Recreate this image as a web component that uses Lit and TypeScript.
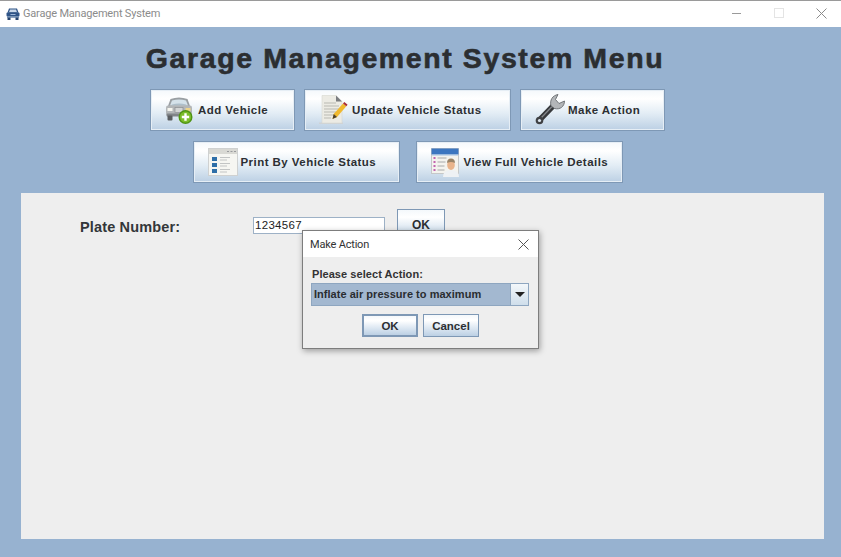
import { LitElement, html, css, svg } from "lit";
import { customElement } from "lit/decorators.js";

const carSmall = svg`<svg width="14" height="12" viewBox="0 0 14 12">
  <path d="M3 .5h8l1.600 4.300H1.400z" fill="#2f5487"/>
  <path d="M4 1.600h6l.9 2.500H3.100z" fill="#c9d7e8"/>
  <rect x="0.500" y="4.600" width="13" height="4" rx="1" fill="#2f5487"/>
  <rect x="1" y="8.400" width="12" height="1.300" fill="#5d7ea8"/>
  <rect x="1.500" y="9.500" width="3" height="2.500" fill="#24426c"/>
  <rect x="9.500" y="9.500" width="3" height="2.500" fill="#24426c"/>
  <rect x="4.500" y="6" width="5" height="1" fill="#9db6d6"/>
</svg>`;

const carPlus = svg`<svg width="30" height="30" viewBox="0 0 30 30">
  <path d="M5.500 4Q14 1 22.500 4L25 11H3z" fill="#9a9fa3"/>
  <path d="M7 5.500Q14 3.500 21 5.500L23 10.500H5z" fill="#d5e2ea"/>
  <path d="M7 9.500Q14 7.500 21 9.500L22 10.500H6z" fill="#aebfca"/>
  <rect x="1" y="10.500" width="26" height="9.500" rx="2" fill="#b3b6b8"/>
  <rect x="2.500" y="13" width="5" height="3" fill="#f5f5ee"/>
  <rect x="20.500" y="13" width="5" height="3" fill="#ecd48a"/>
  <rect x="10" y="12.500" width="8" height="5" fill="#d3d5d5" stroke="#8a8e92" stroke-width=".7"/>
  <rect x="1.500" y="18.500" width="25" height="3" rx="1" fill="#808488"/>
  <rect x="2.500" y="20.500" width="5" height="5" rx="1" fill="#5a5d60"/>
  <rect x="20" y="20.500" width="5" height="5" rx="1" fill="#5a5d60"/>
  <circle cx="20.500" cy="22" r="7" fill="#4f9413"/>
  <circle cx="20.500" cy="22" r="5.600" fill="#7cbd2a"/>
  <path d="M20.500 18.300v7.400M16.800 22h7.400" stroke="#fff" stroke-width="2.400"/>
</svg>`;

const docPencil = svg`<svg width="30" height="30" viewBox="0 0 30 30">
  <path d="M0 27.500h24v1.500H0z" fill="#cfd3d6"/>
  <path d="M3 .5h14l6 6v21.500H3z" fill="#ecebe4" stroke="#d6d6d0" stroke-width=".6"/>
  <path d="M17 .5l6 6h-6z" fill="#7b7d80"/>
  <path d="M5 8h12M5 11h15M5 14h15M5 17h12M5 20h9M5 23h7" stroke="#b9b9b2" stroke-width="1"/>
  <path d="M13.500 24l1.200-5L24 8.500l3.300 2.700L18 22z" fill="#f0b92f"/>
  <path d="M24 8.500l1.300-1.500 3.300 2.700-1.300 1.500z" fill="#a92a35"/>
  <path d="M13.500 24l1.200-5 3.300 3z" fill="#4a4030"/>
</svg>`;

const wrench = svg`<svg width="30" height="32" viewBox="0 0 30 32">
  <path d="M4.500 26L19 11" stroke="#36383b" stroke-width="5.400" stroke-linecap="round"/>
  <path d="M6.500 23.500L18.500 11" stroke="#85888c" stroke-width="1.300"/>
  <circle cx="4.500" cy="26.500" r="3.800" fill="#3f4144"/>
  <circle cx="4.500" cy="26.500" r="1.600" fill="#dfe7ef"/>
  <path d="M16 12C14.500 6 17.500 1.500 23 .5L20.500 5.500 24 9.500 29.500 7C29.500 12.500 25 16 19.500 14.500z" fill="#b3b6b9" stroke="#5c5f63" stroke-width=".8"/>
</svg>`;

const listWindow = svg`<svg width="30" height="28" viewBox="0 0 30 28">
  <rect x=".5" y=".5" width="29" height="27" fill="#f6f6f2" stroke="#cfd1d1"/>
  <rect x="1" y="1" width="28" height="5" fill="#d9d9d4"/>
  <path d="M19 3.500h2M22.500 3.500h2M26 3.500h2" stroke="#9a9b9e"/>
  <rect x="4" y="9" width="5" height="4" fill="#2f6fa8"/>
  <rect x="4" y="15" width="5" height="4" fill="#2f6fa8"/>
  <rect x="4" y="21" width="5" height="4" fill="#2f6fa8"/>
  <path d="M12 9.500h10M12 12h7M12 15.500h10M12 18h7M12 21.500h10M12 24h7" stroke="#c2c4c4"/>
</svg>`;

const userDetails = svg`<svg width="30" height="29" viewBox="0 0 30 29">
  <rect x=".5" y=".5" width="27" height="25" fill="#f4f3ee" stroke="#c6c8c8"/>
  <rect x=".5" y=".5" width="27" height="6" fill="#3c76c0"/>
  <path d="M1 7h26" stroke="#9fc0e4"/>
  <path d="M2.500 10h2M2.500 14h2M2.500 18h2M2.500 22h2" stroke="#b2359a" stroke-width="1.500"/>
  <path d="M6.500 10h9M6.500 14h8M6.500 18h7M6.500 22h7" stroke="#a8aaaa"/>
  <path d="M12 29q0-7 8-7t8 7z" fill="#eef1f4"/>
  <ellipse cx="20" cy="17" rx="3.800" ry="5" fill="#e9b48c"/>
  <path d="M16 15q0-4.500 4-4.500t4 4.500q-4-2-8 0z" fill="#9a8468"/>
</svg>`;

@customElement("menu-button")
export class MenuButton extends LitElement {
  static styles = css`
    :host {
      display: block;
    }
    button {
      box-sizing: border-box;
      width: 100%;
      height: 42px;
      padding: 0 0 0 14px;
      display: flex;
      align-items: center;
      gap: 3px;
      border: 1px solid #7e98b5;
      box-shadow: inset 0 0 0 1px #e6eef5;
      background: linear-gradient(#f4f8fb 0%, #ffffff 22%, #e3edf5 58%, #bcd0e4 100%);
      color: #2c2f33;
      font: bold 11.5px "Liberation Sans", Arial, sans-serif;
      letter-spacing: 0.45px;
    }
    .icon {
      display: flex;
    }
  `;
  static properties = { label: {}, icon: { attribute: false } };
  label = "";
  icon: unknown = null;

  render() {
    return html`<button><span class="icon">${this.icon}</span><span>${this.label}</span></button>`;
  }
}

@customElement("app-root")
export class AppRoot extends LitElement {
  static styles = css`
    :host {
      display: block;
      width: 841px;
      height: 557px;
      overflow: hidden;
      position: relative;
      font-family: "Liberation Sans", Arial, sans-serif;
      background: #97b2d0;
    }
    .titlebar {
      box-sizing: border-box;
      height: 27px;
      background: #fff;
      border-top: 1px solid #9a9a9a;
      display: flex;
      align-items: center;
      padding: 0 14px 1px 6px;
      gap: 3px;
      color: #8b8b8b;
      font: 11px Roboto, "Noto Sans", sans-serif;
      letter-spacing: -0.19px;
    }
    .titlebar .name {
      flex: 1;
    }
    .win-btns {
      display: flex;
      align-items: center;
      gap: 32px;
    }
    .win-btns svg {
      display: block;
    }
    .content {
      display: flex;
      flex-direction: column;
      align-items: center;
      padding: 0 26px 0 0;
    }
    h1 {
      margin: 0 5px 0 0;
      padding-top: 15px;
      height: 47px;
      box-sizing: border-box;
      font-size: 28.500px;
      line-height: 32px;
      font-weight: bold;
      color: #2b2e31;
      letter-spacing: 1.600px;
      -webkit-text-stroke: 0.6px #2b2e31;
      white-space: nowrap;
    }
    .row {
      display: flex;
      height: 42px;
      margin-bottom: 10px;
    }
    .row.first {
      margin-top: 15px;
      gap: 9px;
    }
    .row.second {
      gap: 16px;
    }
    .w145 { width: 145px; }
    .w207 { width: 207px; }
    .panel {
      box-sizing: border-box;
      width: 803px;
      height: 346px;
      margin-left: 21px;
      background: #eeeeee;
      align-self: flex-start;
      display: flex;
      align-items: flex-start;
      padding: 16px 0 0 59px;
    }
    .plate-label {
      width: 173px;
      margin-top: 9px;
      font-size: 14.500px;
      line-height: 18px;
      font-weight: bold;
      letter-spacing: 0.15px;
      color: #333639;
    }
    .plate-input {
      box-sizing: border-box;
      width: 132px;
      height: 17px;
      margin-top: 8px;
      padding-left: 1px;
      background: #fff;
      border: 1px solid #9db1c6;
      font-size: 11.500px;
      line-height: 15px;
      letter-spacing: 0.3px;
      color: #222;
    }
    .plate-ok {
      box-sizing: border-box;
      width: 48px;
      height: 31px;
      margin-left: 12px;
      padding: 0;
      border: 1px solid #7e98b5;
      background: linear-gradient(#f4f8fb, #fff 25%, #dfe9f3 60%, #bcd0e4);
      font: bold 12px "Liberation Sans", Arial, sans-serif;
      color: #2c2f33;
    }
    .dialog {
      position: absolute;
      left: 302px;
      top: 230px;
      box-sizing: border-box;
      width: 237px;
      height: 119px;
      background: #eeeeee;
      border: 1px solid #7d7d7d;
      box-shadow: 1px 2px 6px rgba(0, 0, 0, 0.35);
      display: flex;
      flex-direction: column;
    }
    .dlg-title {
      height: 26px;
      flex: none;
      background: #fff;
      display: flex;
      align-items: center;
      justify-content: space-between;
      padding: 0 9px 0 7px;
      font: 11px Roboto, "Noto Sans", sans-serif;
      letter-spacing: -0.19px;
      color: #333;
    }
    .dlg-title svg {
      display: block;
    }
    .dlg-body {
      display: flex;
      flex-direction: column;
      padding: 10px 9px 0 8px;
    }
    .dlg-label {
      padding-left: 1px;
      font-size: 11px;
      line-height: 14px;
      font-weight: bold;
      letter-spacing: 0.06px;
      color: #333;
    }
    .combo {
      box-sizing: border-box;
      margin-top: 2px;
      height: 23px;
      display: flex;
      border: 1px solid #8ea6c0;
      background: #a3b8d0;
    }
    .combo-value {
      flex: 1;
      padding-left: 2px;
      font-size: 11px;
      line-height: 21px;
      font-weight: bold;
      letter-spacing: 0.03px;
      color: #2a2d30;
    }
    .combo-arrow {
      width: 17px;
      border-left: 1px solid #8ea6c0;
      background: linear-gradient(#f3f7fa, #cfdeeb);
      display: flex;
      align-items: center;
      justify-content: center;
    }
    .combo-arrow i {
      width: 0;
      height: 0;
      border-left: 5px solid transparent;
      border-right: 5px solid transparent;
      border-top: 5px solid #222;
    }
    .dlg-actions {
      display: flex;
      justify-content: center;
      gap: 5px;
      margin-top: 8px;
      padding-left: 1px;
    }
    .dlg-actions button {
      box-sizing: border-box;
      width: 56px;
      height: 23px;
      padding: 0;
      border: 1px solid #7e98b5;
      background: linear-gradient(#f4f8fb, #fff 25%, #dfe9f3 60%, #bcd0e4);
      font: bold 11.500px "Liberation Sans", Arial, sans-serif;
      color: #2c2f33;
    }
    .dlg-actions button.default {
      border: 2px solid #7e98b5;
    }
  `;

  render() {
    return html`
      <div class="titlebar">
        ${carSmall}
        <span class="name">Garage Management System</span>
        <div class="win-btns">
          <svg width="11" height="11"><path d="M2 5.500h9" stroke="#9a9a9a"/></svg>
          <svg width="11" height="11"><rect x="1.500" y=".5" width="9" height="9" fill="none" stroke="#e4e4e4"/></svg>
          <svg width="11" height="11"><path d="M.5.500l10 10M10.500.500l-10 10" stroke="#8a8a8a"/></svg>
        </div>
      </div>
      <div class="content">
        <h1>Garage Management System Menu</h1>
        <div class="row first">
          <menu-button class="w145" label="Add Vehicle" .icon=${carPlus}></menu-button>
          <menu-button class="w207" label="Update Vehicle Status" .icon=${docPencil}></menu-button>
          <menu-button class="w145" label="Make Action" .icon=${wrench}></menu-button>
        </div>
        <div class="row second">
          <menu-button class="w207" label="Print By Vehicle Status" .icon=${listWindow}></menu-button>
          <menu-button class="w207" label="View Full Vehicle Details" .icon=${userDetails}></menu-button>
        </div>
        <div class="panel">
          <div class="plate-label">Plate Number:</div>
          <div class="plate-input">1234567</div>
          <button class="plate-ok">OK</button>
        </div>
      </div>
      <div class="dialog">
        <div class="dlg-title">
          <span>Make Action</span>
          <svg width="11" height="11"><path d="M.5.500l10 10M10.500.500l-10 10" stroke="#555"/></svg>
        </div>
        <div class="dlg-body">
          <div class="dlg-label">Please select Action:</div>
          <div class="combo">
            <div class="combo-value">Inflate air pressure to maximum</div>
            <div class="combo-arrow"><i></i></div>
          </div>
          <div class="dlg-actions">
            <button class="default">OK</button>
            <button>Cancel</button>
          </div>
        </div>
      </div>
    `;
  }
}
